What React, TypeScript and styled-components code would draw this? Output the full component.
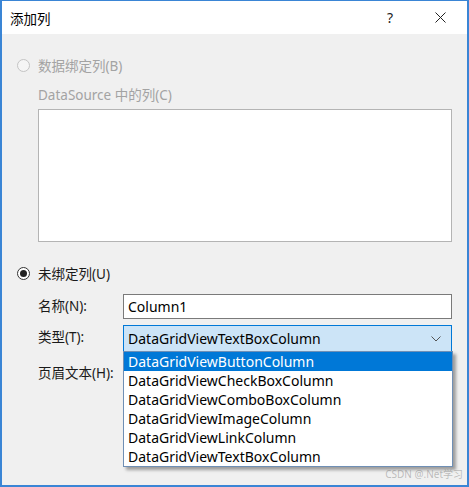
import styled, { createGlobalStyle } from "styled-components";

const GlobalStyle = createGlobalStyle`
  html, body {
    margin: 0;
    padding: 0;
    background: #ffffff;
  }
  body {
    font-family: "Noto Sans", "Noto Sans CJK SC", sans-serif;
    font-size: 13.5px;
    color: #1a1a1a;
  }
`;

const Window = styled.div`
  width: 469px;
  height: 487px;
  box-sizing: border-box;
  border: 2px solid #3a85d5;
  border-top-width: 1px;
  display: flex;
  flex-direction: column;
  background: #f0f0f0;
  position: relative;
  overflow: hidden;
`;

const TitleBar = styled.div`
  height: 33px;
  flex: none;
  background: #ffffff;
  display: flex;
  align-items: center;
  padding-left: 8px;
  > h1 {
    flex: 1;
    margin: 0;
    font-size: 13.5px;
    font-weight: normal;
    color: #000;
  }
`;

const CaptionButton = styled.div<{ $w: number }>`
  width: ${(p) => p.$w}px;
  height: 33px;
  display: flex;
  align-items: center;
  justify-content: center;
  font-size: 14px;
  color: #222;
`;

const Body = styled.div`
  flex: 1;
  padding: 21px 15px 0 15px;
  display: flex;
  flex-direction: column;
`;

const RadioRow = styled.label<{ $disabled?: boolean }>`
  height: 20px;
  display: flex;
  align-items: center;
  gap: 8px;
  color: ${(p) => (p.$disabled ? "#a3a3a3" : "#1a1a1a")};
`;

const RadioDot = styled.span<{ $checked?: boolean; $disabled?: boolean }>`
  width: 13px;
  height: 13px;
  box-sizing: border-box;
  border-radius: 50%;
  border: 1px solid ${(p) => (p.$disabled ? "#c4c4c4" : "#333333")};
  background: ${(p) => (p.$disabled ? "#f5f5f5" : "#ffffff")};
  display: flex;
  align-items: center;
  justify-content: center;
  &::after {
    content: "";
    display: ${(p) => (p.$checked ? "block" : "none")};
    width: 7px;
    height: 7px;
    border-radius: 50%;
    background: #222;
  }
`;

const Indented = styled.div<{ $top: number }>`
  margin-left: 21px;
  margin-top: ${(p) => p.$top}px;
`;

const Caption = styled.div`
  height: 20px;
  line-height: 20px;
  color: #a3a3a3;
`;

const ListBox = styled.div`
  height: 133px;
  box-sizing: border-box;
  border: 1px solid #b4b4b4;
  background: #ffffff;
  margin-top: 4px;
`;

const FormGrid = styled.div`
  display: grid;
  grid-template-columns: 85px 329px;
  row-gap: 6px;
  margin-top: 11px;
  margin-left: 21px;
`;

const FieldLabel = styled.div<{ $shift?: number }>`
  height: 25px;
  line-height: 25px;
  color: #1a1a1a;
  position: relative;
  top: ${(p) => p.$shift ?? 0}px;
`;

const TextBox = styled.div`
  height: 25px;
  box-sizing: border-box;
  border: 1px solid #7a7a7a;
  background: #ffffff;
  padding-left: 4px;
  line-height: 23px;
  font-size: 14px;
  color: #000;
`;

const Combo = styled.div`
  height: 27px;
  box-sizing: border-box;
  border: 1px solid #0078d7;
  background: #cce4f7;
  padding: 0 10px 0 4px;
  display: flex;
  align-items: center;
  justify-content: space-between;
  font-size: 14px;
  color: #000;
  position: relative;
`;

const DropList = styled.ul`
  position: absolute;
  top: 100%;
  left: -1px;
  right: -2px;
  margin: 0;
  padding: 0;
  list-style: none;
  box-sizing: border-box;
  border: 1px solid #6f8fb5;
  background: #ffffff;
  box-shadow: 3px 3px 3px rgba(0, 0, 0, 0.35);
  z-index: 2;
`;

const DropItem = styled.li<{ $active?: boolean }>`
  height: 19px;
  line-height: 19px;
  padding-left: 4px;
  background: ${(p) => (p.$active ? "#0078d7" : "transparent")};
  color: ${(p) => (p.$active ? "#ffffff" : "#000000")};
`;

const Watermark = styled.div`
  position: absolute;
  right: 4px;
  bottom: 4px;
  font-size: 10px;
  color: rgba(120, 120, 120, 0.45);
  z-index: 3;
`;

const columnTypes = [
  "DataGridViewButtonColumn",
  "DataGridViewCheckBoxColumn",
  "DataGridViewComboBoxColumn",
  "DataGridViewImageColumn",
  "DataGridViewLinkColumn",
  "DataGridViewTextBoxColumn",
];

export default function App() {
  return (
    <>
      <GlobalStyle />
      <Window>
        <TitleBar>
          <h1>添加列</h1>
          <CaptionButton $w={46}>?</CaptionButton>
          <CaptionButton $w={54}>
            <svg width="11" height="11" viewBox="0 0 11 11">
              <path d="M0.5 0.5 L10.5 10.5 M10.5 0.5 L0.5 10.5" stroke="#222" strokeWidth="1" />
            </svg>
          </CaptionButton>
        </TitleBar>
        <Body>
          <RadioRow $disabled>
            <RadioDot $disabled />
            数据绑定列(B)
          </RadioRow>
          <Indented $top={10}>
            <Caption>DataSource 中的列(C)</Caption>
            <ListBox />
          </Indented>
          <RadioRow style={{ marginTop: 21 }}>
            <RadioDot $checked />
            未绑定列(U)
          </RadioRow>
          <FormGrid>
            <FieldLabel>名称(N):</FieldLabel>
            <TextBox>Column1</TextBox>
            <FieldLabel>类型(T):</FieldLabel>
            <Combo>
              DataGridViewTextBoxColumn
              <svg width="10" height="6" viewBox="0 0 10 6">
                <path d="M0.5 0.5 L5 5 L9.5 0.5" fill="none" stroke="#555" strokeWidth="1" />
              </svg>
              <DropList>
                {columnTypes.map((t, i) => (
                  <DropItem key={t} $active={i === 0}>
                    {t}
                  </DropItem>
                ))}
              </DropList>
            </Combo>
            <FieldLabel $shift={3}>页眉文本(H):</FieldLabel>
            <TextBox />
          </FormGrid>
        </Body>
        <Watermark>CSDN @.Net学习</Watermark>
      </Window>
    </>
  );
}
